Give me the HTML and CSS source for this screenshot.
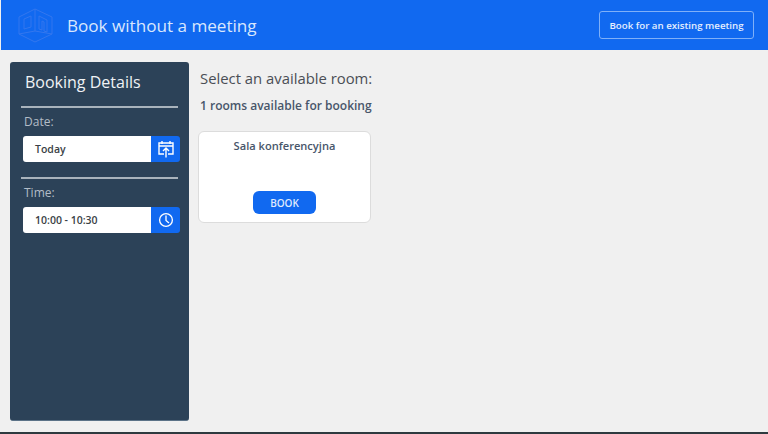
FILE: index.html
```html
<!DOCTYPE html>
<html lang="en">
<head>
<meta charset="utf-8">
<title>Book without a meeting</title>
<link rel="stylesheet" href="styles.css">
</head>
<body>
<div class="page">
  <header class="topbar">
    <svg class="logo" viewBox="0 0 36 36" fill="none" stroke="#3377ee" stroke-width="1">
      <path d="M1 10 L17 2 L34 10 V27 L17 35 L1 27 Z"/>
      <path d="M17 2 V24 M1 27 L17 24 L34 27"/>
      <path d="M6 12 L13 9 V20 L6 22 Z"/>
      <path d="M21 9 L29 13 V25 L26 24 V15 L24 14 V23 L21 22 Z"/>
    </svg>
    <h1 class="title">Book without a meeting</h1>
    <button class="existing">Book for an existing meeting</button>
  </header>
  <div class="content">
    <aside class="sidebar">
      <h2 class="side-title">Booking Details</h2>
      <div class="rule"></div>
      <label class="field-label">Date:</label>
      <div class="picker">
        <span class="picker-value">Today</span>
        <span class="picker-btn">
          <svg class="picker-icon" viewBox="0 0 16 18" fill="none" stroke="#fff" stroke-width="1.4">
            <path d="M6 14 H1 V3 H15 V14 H10"/>
            <path d="M1 6 H15"/>
            <path d="M4 1 V4 M12 1 V4"/>
            <path d="M8 17.5 V8 M5 11 L8 8 L11 11"/>
          </svg>
        </span>
      </div>
      <div class="rule rule-gap"></div>
      <label class="field-label">Time:</label>
      <div class="picker">
        <span class="picker-value">10:00 - 10:30</span>
        <span class="picker-btn">
          <svg class="picker-icon" viewBox="0 0 18 18" fill="none" stroke="#fff" stroke-width="1.5">
            <circle cx="9" cy="9" r="7.2"/>
            <path d="M9 4.5 V9.5 L12 12" stroke-linecap="round"/>
          </svg>
        </span>
      </div>
    </aside>
    <main class="main">
      <h2 class="main-title">Select an available room:</h2>
      <p class="count">1 rooms available for booking</p>
      <div class="card">
        <div class="room-name">Sala konferencyjna</div>
        <button class="book">BOOK</button>
      </div>
    </main>
  </div>
  <div class="baseline"></div>
</div>
</body>
</html>
```
FILE: styles.css
```css
* { box-sizing: border-box; }
html, body { margin: 0; padding: 0; height: 100%; }
body { font-family: "Open Sans", "Liberation Sans", sans-serif; background: #f0f0f0; overflow: hidden; }
.page { height: 434px; display: flex; flex-direction: column; }
.topbar {
  height: 50px; margin-left: 1px; background: #1169f0; display: flex; align-items: center;
  padding: 0 14px 0 17px; flex: none;
}
.logo { width: 36px; height: 36px; flex: none; }
.title { margin: 0 0 0 13px; font-size: 17.1px; font-weight: 400; color: #d9e7fd; flex: 1; }
.existing {
  font-family: inherit; font-size: 9.7px; font-weight: 600; color: #e4eefe; background: transparent;
  border: 1px solid #7fb0f8; border-radius: 3px; width: 155px; height: 28px; padding: 0;
}
.content { flex: 1; display: flex; padding: 12px 0 11px 10px; min-height: 0; }
.sidebar {
  width: 179px; background: #2c4258; border-radius: 3px; padding: 9px 11px 0 11px;
  border-bottom: 1px solid #5b7287; flex: none;
}
.side-title { margin: 0; padding-left: 4px; font-size: 16px; line-height: 22px; font-weight: 400; color: #f0f2f5; }
.rule { height: 2px; background: #a9b3bc; margin-top: 13px; }
.rule-gap { margin-top: 15px; }
.field-label { display: block; margin: 6px 0 6px 3px; font-size: 12px; line-height: 16px; color: #b3bdc7; }
.picker { display: flex; height: 26px; margin: 0 -2px 0 2px; border-radius: 3px; overflow: hidden; width: 157px; }
.picker-value { flex: 1; background: #fff; font-size: 10.5px; font-weight: 600; color: #3a3f46; padding-left: 12px; line-height: 26px; }
.picker-btn { width: 29px; background: #1169f0; display: flex; align-items: center; justify-content: center; }
.picker-icon { width: 16px; height: 18px; }
.main { padding: 6px 0 0 9px; flex: 1; }
.main-title { margin: 0; padding-left: 2px; font-size: 14.85px; line-height: 20px; font-weight: 400; color: #4a4e55; }
.count { margin: 9px 0 0 2px; font-size: 12px; line-height: 17px; font-weight: 600; color: #48566a; }
.card {
  width: 173px; height: 92px; margin-top: 17px; background: #fff; border: 1px solid #dcdcdc; border-radius: 6px;
  display: flex; flex-direction: column; align-items: center; padding-top: 6px;
}
.room-name { font-size: 11.1px; line-height: 16px; font-weight: 600; color: #48566a; }
.book {
  margin-top: 37px; width: 63px; height: 23px; border: 0; border-radius: 6px; background: #1169f0; color: #dfeafd;
  font-family: inherit; font-size: 10px; font-weight: 600; padding: 0;
}
.baseline { height: 2px; background: #2e3a3f; flex: none; }
```
